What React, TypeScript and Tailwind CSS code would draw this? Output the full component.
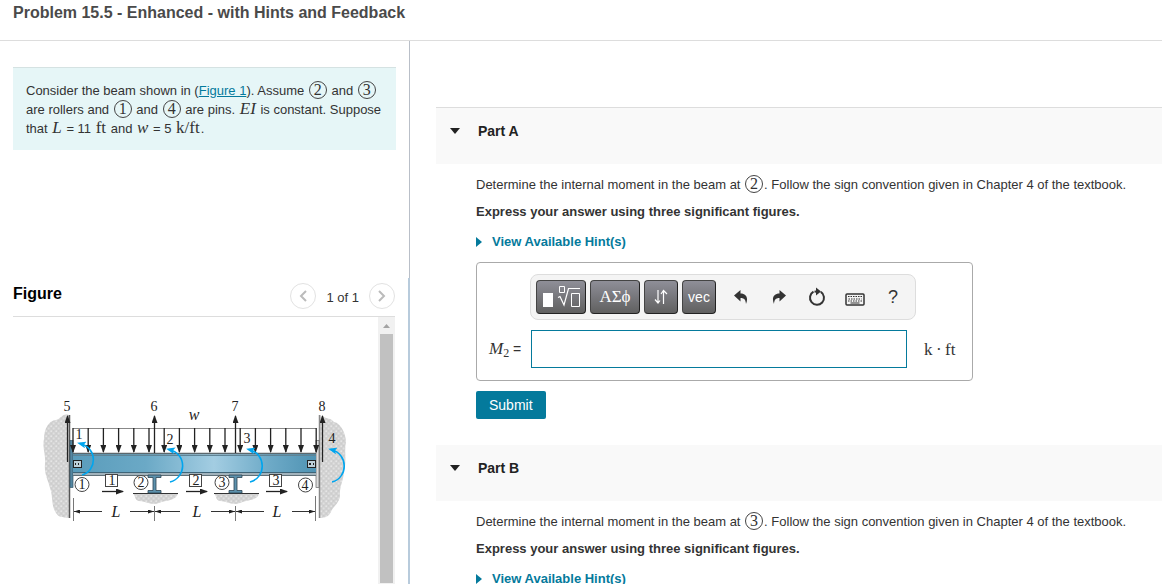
import { useState } from "react";
import type { ReactNode } from "react";

const LOAD_ARROWS = Array.from({ length: 17 }, (_, i) => 73 + i * 15.2);

const Serif = ({ children, className = "" }: { children: ReactNode; className?: string }) => (
  <span className={`mx-px font-['Liberation_Serif',serif] text-[17px] leading-none ${className}`}>{children}</span>
);

const Circled = ({ n }: { n: number }) => (
  <span className="mx-px -mt-1 inline-flex h-[18px] w-[18px] items-center justify-center rounded-full border border-[#444] align-middle font-['Liberation_Serif',serif] text-base leading-none">
    {n}
  </span>
);

function Support({ x }: { x: number }) {
  return (
    <g>
      <path d={`M${x - 21} 493.500H${x + 24}C${x + 22} 501 ${x + 12} 500 ${x + 5} 503C${x - 3} 506 ${x - 8} 501 ${x - 15} 501C${x - 20} 500 ${x - 18} 496 ${x - 21} 493.500Z`} fill="url(#rock)" />
      <path d={`M${x - 21} 493.500H${x + 24}`} stroke="#333" />
      <path d={`M${x - 6} 475h13v2.500h-5v13h5v2.500h-13v-2.500h5v-13h-5z`} fill="#5d92ad" stroke="#2c4250" strokeWidth=".8" />
    </g>
  );
}

function BeamFigure() {
  return (
    <svg viewBox="40 396 310 130" className="block h-[130px] w-[310px] max-w-none" role="img" aria-label="Continuous beam on four supports">
      <defs>
        <linearGradient id="steel" x1="0" x2="1" y1="0" y2="0">
          <stop offset="0" stopColor="#5a9cbb" />
          <stop offset=".3" stopColor="#6ba9c6" />
          <stop offset=".58" stopColor="#a3cde2" />
          <stop offset=".8" stopColor="#6fabc8" />
          <stop offset="1" stopColor="#4f93b3" />
        </linearGradient>
        <pattern id="rock" width="5" height="5" patternUnits="userSpaceOnUse">
          <rect width="5" height="5" fill="#d2d2d2" />
          <circle cx="1.200" cy="1.200" r=".9" fill="#e6e6e6" />
          <circle cx="3.700" cy="3.400" r="1" fill="#e0e0e0" />
          <circle cx="3.600" cy=".8" r=".5" fill="#c4c4c4" />
          <circle cx="1.200" cy="3.800" r=".5" fill="#c6c6c6" />
        </pattern>
        <marker id="head" viewBox="0 0 8 6" markerWidth="8" markerHeight="6" refX="7" refY="3" orient="auto" markerUnits="userSpaceOnUse">
          <path d="M0 0L8 3L0 6Z" fill="#222" />
        </marker>
        <marker id="thin" viewBox="0 0 6 4" markerWidth="6" markerHeight="4" refX="6" refY="2" orient="auto-start-reverse" markerUnits="userSpaceOnUse">
          <path d="M0 0L6 2L0 4Z" fill="#222" />
        </marker>
        <marker id="turn" viewBox="0 0 9 7" markerWidth="9" markerHeight="7" refX="6" refY="3.500" orient="auto" markerUnits="userSpaceOnUse">
          <path d="M0 0L9 3.500L0 7L2 3.500Z" fill="#00a5ee" />
        </marker>
      </defs>

      {/* walls */}
      <path d="M69 415C62 413 61 419 56 420C49 420 44 429 44 439C42 448 46 455 45 464C44 474 48 480 50 488C53 495 51 506 56 513C60 519 65 517 69 518Z" fill="url(#rock)" />
      <path d="M69.500 415V518" stroke="#555" strokeWidth="1.500" />
      <path d="M320 415C325 419 330 417 334 422C341 423 346 434 346 442C344 450 347 461 344 470C344 480 339 487 340 496C339 504 333 506 331 512C327 519 323 517 320 518Z" fill="url(#rock)" />
      <path d="M319.500 415V518" stroke="#888" strokeWidth="1.500" />
      <rect x="70" y="440.500" width="3" height="47" fill="#5486a0" stroke="#345566" strokeWidth=".7" />
      <rect x="316" y="440.500" width="3" height="47" fill="#ddd" stroke="#666" strokeWidth=".7" />

      {/* distributed load */}
      <path d="M73 428.500H316" stroke="#888" />
      <g stroke="#222" strokeWidth="1.300">
        {LOAD_ARROWS.map((x) => (
          <path key={x} d={`M${x} 428V452`} markerEnd="url(#head)" />
        ))}
      </g>

      {/* beam */}
      <rect x="73" y="453" width="243" height="22" fill="url(#steel)" />
      <path d="M73 453.500H316" stroke="#5b676d" strokeWidth="1.500" />
      <path d="M73 455.500H316" stroke="#5f8496" />
      <path d="M73 472.500H316" stroke="#3f6578" />
      <path d="M73 474H316" stroke="#a2b3bc" strokeWidth="2" />
      <path d="M73 475.500H316" stroke="#607078" />
      <g fill="#bed0d9" stroke="#222">
        <rect x="73.500" y="460.500" width="8" height="7" />
        <rect x="307.500" y="460.500" width="8" height="7" />
        <path d="M75 464h1M78 464h1M309 464h2M313 464h1" strokeWidth="2" />
      </g>

      <Support x={154} />
      <Support x={235} />

      {/* vertical degrees of freedom */}
      <g stroke="#222" strokeWidth="1.300">
        <path d="M67.500 462V416" markerEnd="url(#head)" />
        <path d="M154.500 453V416" markerEnd="url(#head)" />
        <path d="M235.500 453V416" markerEnd="url(#head)" />
        <path d="M322.500 462V416" markerEnd="url(#head)" />
        <path d="M102 491.500H123" markerEnd="url(#head)" />
        <path d="M186 491.500H207" markerEnd="url(#head)" />
        <path d="M266 491.500H287" markerEnd="url(#head)" />
      </g>

      {/* rotations */}
      <g fill="none" stroke="#00a5ee" strokeWidth="1.600">
        <path d="M82 475C97 471 98 448 80 443.500" markerEnd="url(#turn)" />
        <path d="M170 482C186 478 188 454 169 449.500" markerEnd="url(#turn)" />
        <path d="M250 482C266 478 267 454 249 449.500" markerEnd="url(#turn)" />
        <path d="M332 482C348 478 349 454 331 449.500" markerEnd="url(#turn)" />
      </g>

      {/* member and node tags */}
      <g fill="#fff" stroke="#444">
        <rect x="105.500" y="474.500" width="12" height="12" />
        <rect x="189.500" y="474.500" width="12" height="12" />
        <rect x="269.500" y="474.500" width="12" height="12" />
        <circle cx="82" cy="484.500" r="7" />
        <circle cx="141" cy="482.500" r="7" />
        <circle cx="222" cy="482.500" r="7" />
        <circle cx="305.500" cy="485" r="7" />
      </g>

      {/* dimensions */}
      <path d="M73.500 498V521M154.500 506V521M235.500 506V521M315.500 496V521" stroke="#777" />
      <g stroke="#333" fill="none">
        <path d="M102 511.500H74" markerEnd="url(#thin)" />
        <path d="M130 511.500H154" markerEnd="url(#thin)" />
        <path d="M180 511.500H155" markerEnd="url(#thin)" />
        <path d="M211 511.500H235" markerEnd="url(#thin)" />
        <path d="M264 511.500H236" markerEnd="url(#thin)" />
        <path d="M292 511.500H315" markerEnd="url(#thin)" />
      </g>

      <g fill="#222" textAnchor="middle" className="font-['Liberation_Serif',serif] text-[14px]">
        <text x="67" y="411">5</text>
        <text x="154" y="411">6</text>
        <text x="235" y="411">7</text>
        <text x="322" y="411">8</text>
        <text x="79" y="439">1</text>
        <text x="170" y="444">2</text>
        <text x="247" y="443">3</text>
        <text x="332" y="443">4</text>
        <text x="112" y="485">1</text>
        <text x="196" y="485">2</text>
        <text x="276" y="485">3</text>
        <text x="82" y="489">1</text>
        <text x="141" y="487">2</text>
        <text x="222" y="487">3</text>
        <text x="305" y="490">4</text>
        <g className="text-[16px] italic">
          <text x="194" y="420">w</text>
          <text x="116" y="517">L</text>
          <text x="197" y="517">L</text>
          <text x="277" y="517">L</text>
        </g>
      </g>
    </svg>
  );
}

const KEY =
  "flex h-[34px] items-center justify-center rounded border border-[#444] border-r-[#222] border-b-[#222] bg-linear-to-b from-[#8f8f98] to-[#606060] text-white";
const TOOL = "flex h-[34px] w-[38px] items-center justify-center text-[#333]";

function MathToolbar() {
  return (
    <div className="flex w-fit rounded-lg border border-[#ddd] bg-[#f4f4f4] py-[5px] pr-[3px] pl-[5px]">
      <div className="mr-[6px] flex gap-1">
        <button aria-label="Templates" className={`${KEY} w-[50px]`}>
          <svg width="38" height="24" viewBox="0 0 38 24" fill="none" stroke="currentColor">
            <path d="M1 8h10v14H1z" fill="currentColor" stroke="none" />
            <path d="M17.500 1.500h5v6h-5zM29.500 8.500h8v13h-8z" />
            <path d="M16 12.500l2-1 4 8.500L26.500 3.500H38" strokeWidth="1.200" />
          </svg>
        </button>
        <button className={`${KEY} w-[50px] font-['Liberation_Serif',serif] text-[17px]`}>ΑΣϕ</button>
        <button aria-label="Arrows" className={`${KEY} w-[34px]`}>
          <svg width="14" height="16" viewBox="0 0 14 16" fill="none" stroke="currentColor" strokeWidth="1.200">
            <path d="M4 1v13M1 10.500L4 14l2-2.500M9.500 15V2M7 5l2.500-3.500L13 5" />
          </svg>
        </button>
        <button className={`${KEY} w-[34px] text-sm`}>vec</button>
      </div>
      <button aria-label="Undo" className={TOOL}>
        <svg width="14" height="14" viewBox="0 0 14 14" fill="currentColor">
          <path d="M0 5.500L6.500 0v3.400C12.500 3.400 14.500 8 12 14c-.3-4-1.500-6-5.500-6v3.500z" />
        </svg>
      </button>
      <button aria-label="Redo" className={TOOL}>
        <svg width="14" height="14" viewBox="0 0 14 14" fill="currentColor">
          <path d="M14 5.500L7.500 0v3.400C1.500 3.400-.5 8 2 14c.3-4 1.500-6 5.500-6v3.500z" />
        </svg>
      </button>
      <button aria-label="Reset" className={TOOL}>
        <svg width="18" height="20" viewBox="0 0 18 20" fill="none">
          <path d="M5.500 4.700A7 7 0 1 0 12.800 4.900" stroke="currentColor" strokeWidth="2" />
          <path d="M8.500 4.600H6.500" stroke="currentColor" strokeWidth="2" />
          <path d="M8 .5l5 4-5 4z" fill="currentColor" />
        </svg>
      </button>
      <button aria-label="Keyboard" className={TOOL}>
        <svg width="20" height="13" viewBox="0 0 20 13" fill="none" stroke="currentColor" className="mt-1">
          <rect x="1" y="1" width="18" height="11" rx="1" strokeWidth="1.500" />
          <path d="M3 3.500h14M3.500 6h13M3 8h14" strokeDasharray="1.500 1" />
          <path d="M5.500 10h9" />
        </svg>
      </button>
      <button aria-label="Help" className={`${TOOL} text-lg`}>
        ?
      </button>
    </div>
  );
}

function Part({ name, node, first, children }: { name: string; node: number; first?: boolean; children?: ReactNode }) {
  return (
    <section className={first ? "border-t border-[#ddd]" : ""}>
      <h2 className="flex h-14 items-start bg-[#f9f9f9] pt-[13px] text-sm font-bold text-[#222]">
        <button className="flex items-center pl-[14px]">
          <svg width="10" height="6" viewBox="0 0 10 6" fill="currentColor" className="mr-[18px]">
            <path d="M0 0h10L5 6z" />
          </svg>
          {name}
        </button>
      </h2>
      <div className="pt-[11px] pl-10">
        <p className="leading-5">
          Determine the internal moment in the beam at <Circled n={node} />. Follow the sign convention given in Chapter 4 of the textbook.
        </p>
        <p className="mt-[7px] leading-5 font-bold">Express your answer using three significant figures.</p>
        <button className="mt-[10px] flex items-center leading-5 font-bold text-[#047a9c]">
          <svg width="6" height="10" viewBox="0 0 6 10" fill="currentColor" className="mr-[10px]">
            <path d="M0 0l6 5-6 5z" />
          </svg>
          View Available Hint(s)
        </button>
        {children}
      </div>
    </section>
  );
}

export default function App() {
  const [answer, setAnswer] = useState("");

  return (
    <div className="flex h-screen flex-col overflow-hidden bg-white font-['Liberation_Sans',Arial,sans-serif] text-[13px] text-[#333]">
      <header className="border-b border-[#ddd] px-[13px] pt-px pb-[15px] text-[#4a4a4a]">
        <h1 className="text-base leading-6 font-bold">Problem 15.5 - Enhanced - with Hints and Feedback</h1>
      </header>

      <div className="grid min-h-0 flex-1 grid-cols-[minmax(0,410px)_minmax(0,1fr)]">
        <aside className="flex min-h-0 flex-col">
          <div className="h-[237px] shrink-0 border-r border-[#b9bfc8] pt-[26px] pr-[13px] pl-[13px]">
            <p className="border-t border-[#d5e2e2] bg-[#e6f6f7] px-[13px] pt-[13px] pb-3 leading-[19px]">
              Consider the beam shown in (
              <a href="#figure" className="text-[#047a9c] underline">
                Figure 1
              </a>
              ). Assume <Circled n={2} /> and <Circled n={3} /> are rollers and <Circled n={1} /> and <Circled n={4} /> are pins.{" "}
              <Serif className="italic">EI</Serif> is constant. Suppose that <Serif className="italic">L</Serif> = 11 <Serif>ft</Serif> and{" "}
              <Serif className="italic">w</Serif> = 5 <Serif>k/ft</Serif>.
            </p>
          </div>

          <div id="figure" className="flex min-h-0 flex-1 flex-col border-r-2 border-[#b8cbdc] pr-[13px] pl-[13px]">
            <div className="flex items-start justify-between border-b border-[#ddd] pt-[5px] pb-[7px]">
              <h2 className="text-base leading-[22px] font-bold text-black">Figure</h2>
              <div className="flex items-center">
                <button aria-label="Previous figure" className="flex h-[26px] w-[26px] items-center justify-center rounded-full border border-[#e2e2e2]">
                  <svg width="8" height="12" viewBox="0 0 8 12" fill="none" stroke="#bbb" strokeWidth="2">
                    <path d="M7 1L2 6l5 5" />
                  </svg>
                </button>
                <span className="px-[10px] pt-1">1 of 1</span>
                <button aria-label="Next figure" className="flex h-[26px] w-[26px] items-center justify-center rounded-full border border-[#e2e2e2]">
                  <svg width="8" height="12" viewBox="0 0 8 12" fill="none" stroke="#bbb" strokeWidth="2">
                    <path d="M1 1l5 5-5 5" />
                  </svg>
                </button>
              </div>
            </div>
            <div className="flex min-h-0 flex-1">
              <div className="min-w-0 flex-1 overflow-hidden pt-[79px] pl-[27px]">
                <BeamFigure />
              </div>
              <div className="flex w-[17px] flex-col items-center bg-[#f1f1f1] pb-px">
                <svg width="7" height="17" viewBox="0 0 7 17" fill="#a3a3a3" className="shrink-0">
                  <path d="M0 11h7L3.500 7z" />
                </svg>
                <div className="w-[13px] flex-1 bg-[#c1c1c1]" />
              </div>
            </div>
          </div>
        </aside>

        <main className="min-h-0 overflow-hidden pt-[66px] pl-[26px]">
          <Part name="Part A" node={2} first>
            <div className="mt-[10px] w-fit rounded border border-[#aaa] pt-[11px] pr-4 pb-3 pl-3">
              <div className="ml-[41px]">
                <MathToolbar />
              </div>
              <div className="mt-[10px] flex items-center">
                <label htmlFor="answer" className="w-[42px] text-sm whitespace-nowrap">
                  <span className="font-['Liberation_Serif',serif] text-[17px] italic">M</span>
                  <sub className="font-['Liberation_Serif',serif] text-xs">2</sub> =
                </label>
                <input
                  id="answer"
                  value={answer}
                  onChange={(e) => setAnswer(e.target.value)}
                  className="h-[38px] w-[376px] border border-[#047a9c] bg-white px-2 outline-none"
                />
                <Serif className="ml-[17px]">k{"\u2009"}·{"\u2009"}ft</Serif>
              </div>
            </div>
            <button className="mt-[10px] mb-[26px] block h-7 rounded-xs bg-[#047a9c] px-[13px] text-sm text-white">Submit</button>
          </Part>
          <Part name="Part B" node={3} />
        </main>
      </div>
    </div>
  );
}
